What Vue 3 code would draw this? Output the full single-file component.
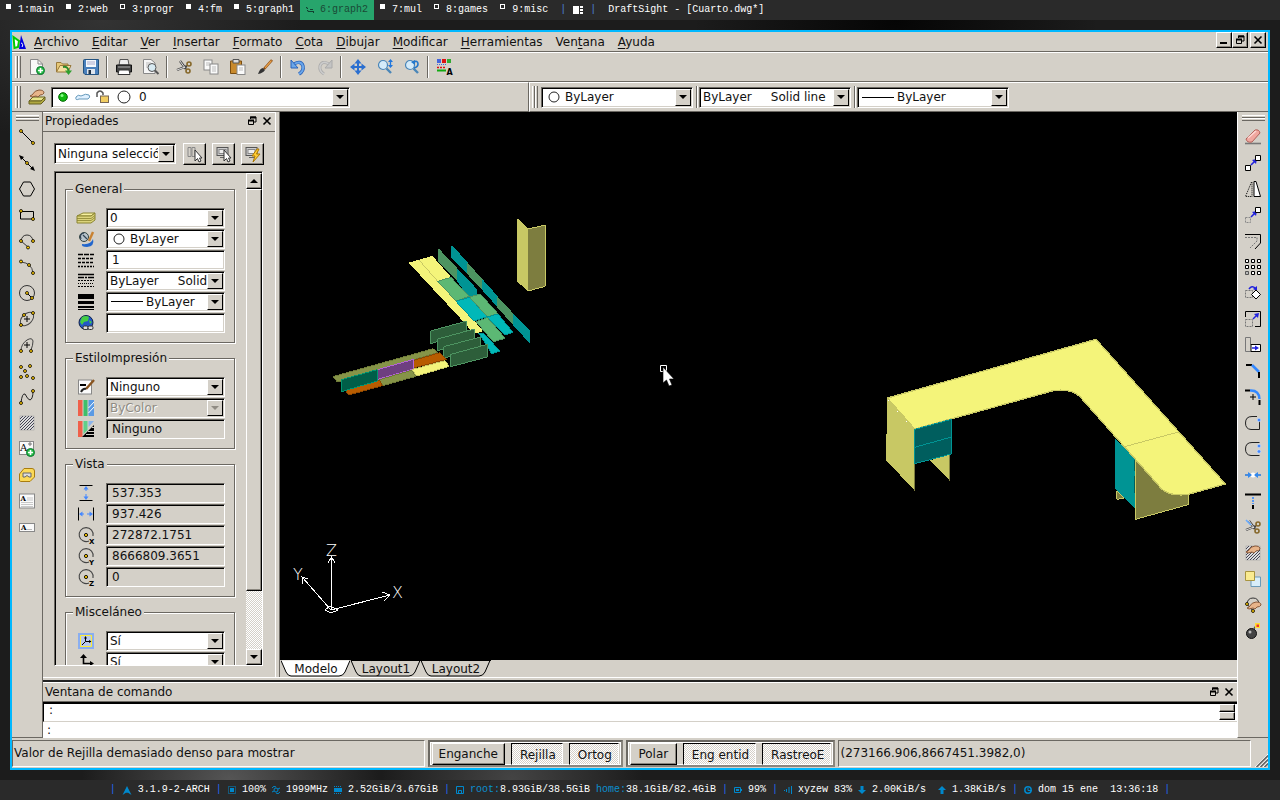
<template>
  <div class="screen">
    <!-- Workspace bar -->
    <header class="wm-bar">
      <button
        v-for="ws in workspaces"
        :key="ws.name"
        class="workspace"
        :class="{ active: ws.active }"
      >
        <svg v-if="ws.active" class="ws-swirl" viewBox="0 0 8 6">
          <path d="M0 .5h1v1h1M1 3.500h1v1h5M4 2.500h3M7.500 4v2" />
        </svg>
        <span v-else class="ws-mark" :class="{ hollow: ws.hollow }" />
        {{ ws.name }}
      </button>
      <span class="bar-sep">|</span>
      <svg class="layout-icon" viewBox="0 0 10 8">
        <path d="M0 0h6v8H0zM7 0h3v2H7zM7 3h3v2H7zM7 6h3v2H7z" fill="#fff" />
      </svg>
      <span class="bar-sep">|</span>
      <span class="wm-title">DraftSight - [Cuarto.dwg*]</span>
    </header>

    <div class="desktop">
      <main class="window">
        <!-- Menu bar -->
        <nav class="menu-bar">
          <svg class="app-icon" viewBox="0 0 16 16">
            <path d="M1.500 3L7 7L6 13L2.500 14Z" fill="#fff" stroke="#0c0" stroke-width="2" />
            <path d="M9 1l5 14H7z" fill="#00d" />
            <path d="M9 9c2 0 2 3 1 4" fill="none" stroke="#fff" />
          </svg>
          <button v-for="item in menus" :key="item.join('')" class="menu-item">
            {{ item[0] }}<u>{{ item[1] }}</u>{{ item[2] }}
          </button>
          <div class="mdi-buttons">
            <button class="mdi" aria-label="Minimizar">
              <svg viewBox="0 0 10 10"><path d="M1 8h7" stroke="#000" stroke-width="2" /></svg>
            </button>
            <button class="mdi" aria-label="Restaurar">
              <svg viewBox="0 0 10 10" v-html="icons.restore" />
            </button>
            <button class="mdi mdi-close" aria-label="Cerrar">
              <svg viewBox="0 0 10 10" v-html="icons.close" />
            </button>
          </div>
        </nav>

        <!-- Standard toolbar -->
        <div class="toolbar">
          <span class="handle" />
          <template v-for="(group, g) in standardTools" :key="g">
            <span v-if="g" class="tool-sep" />
            <button v-for="name in group" :key="name" class="tool" :aria-label="name">
              <svg class="icon" viewBox="0 0 16 16" v-html="icons[name]" />
            </button>
          </template>
        </div>

        <!-- Layer and property toolbars -->
        <div class="toolbar-row">
          <div class="toolbar layer-bar">
            <span class="handle" />
            <button class="tool" aria-label="Administrador de capas">
              <svg class="icon" viewBox="0 0 16 16" v-html="icons.layerManager" />
            </button>
            <div class="combo layer-combo">
              <svg class="layer-state" viewBox="0 0 74 16" v-html="icons.layerState" />
              <select aria-label="Capa"><option>0</option></select>
              <span class="arrow" />
            </div>
          </div>
          <div class="toolbar props-bar">
            <span class="handle" />
            <div class="combo with-circle">
              <svg class="circle-mark" viewBox="0 0 12 12" v-html="icons.ring" />
              <select aria-label="Color"><option>ByLayer</option></select>
              <span class="arrow" />
            </div>
            <span class="thin-sep" />
            <div class="combo">
              <select aria-label="Estilo de línea">
                <option>{{ solidLine }}</option>
              </select>
              <span class="arrow" />
            </div>
            <span class="thin-sep" />
            <div class="combo with-line">
              <span class="line-mark" />
              <select aria-label="Grosor de línea"><option>ByLayer</option></select>
              <span class="arrow" />
            </div>
          </div>
        </div>

        <div class="work-area">
          <aside class="side-tools left-tools">
            <span class="handle-h" />
            <button v-for="name in drawTools" :key="name" class="side-tool" :aria-label="name">
              <svg class="icon" viewBox="0 0 16 16" v-html="icons[name]" />
            </button>
          </aside>

          <div class="center">
            <div class="upper">
              <!-- Properties palette -->
              <section class="palette">
                <div class="dock-title">
                  <span>Propiedades</span>
                  <button class="dock-btn" aria-label="Desacoplar">
                    <svg viewBox="0 0 10 10" v-html="icons.restore" />
                  </button>
                  <button class="dock-btn" aria-label="Cerrar panel">
                    <svg viewBox="0 0 10 10" v-html="icons.close" />
                  </button>
                </div>
                <div class="selection-row">
                  <div class="combo">
                    <select aria-label="Selección"><option>Ninguna selección</option></select>
                    <span class="arrow" />
                  </div>
                  <button
                    v-for="name in ['pickAdd', 'pickObjects', 'quickSelect']"
                    :key="name"
                    class="raised"
                    :aria-label="name"
                  >
                    <svg class="icon" viewBox="0 0 16 16" v-html="icons[name]" />
                  </button>
                </div>
                <div class="scroll-box">
                  <div class="scroll-content">
                    <fieldset v-for="group in propertyGroups" :key="group.title" class="group">
                      <legend>{{ group.title }}</legend>
                      <label v-for="row in group.rows" :key="row.icon" class="prop-row">
                        <svg class="icon prop-icon" viewBox="0 0 16 16" v-html="icons[row.icon]" />
                        <span
                          v-if="row.type === 'select'"
                          class="combo"
                          :class="[row.mark && 'with-' + row.mark, { disabled: row.disabled }]"
                        >
                          <svg
                            v-if="row.mark === 'circle'"
                            class="circle-mark"
                            viewBox="0 0 12 12"
                            v-html="icons.ring"
                          />
                          <span v-if="row.mark === 'line'" class="line-mark" />
                          <select :disabled="row.disabled" :aria-label="row.icon">
                            <option>{{ row.value }}</option>
                          </select>
                          <span class="arrow" />
                        </span>
                        <input
                          v-else
                          class="field"
                          type="text"
                          :class="{ flat: row.readonly }"
                          :readonly="row.readonly"
                          :value="row.value"
                          :aria-label="row.icon"
                        >
                      </label>
                    </fieldset>
                  </div>
                  <div class="scrollbar">
                    <button class="scroll-btn up" aria-label="Subir" />
                    <div class="thumb" />
                    <div class="track" />
                    <button class="scroll-btn down" aria-label="Bajar" />
                  </div>
                </div>
              </section>

              <!-- Drawing area -->
              <section class="drawing">
                <svg class="scene" viewBox="280 112 957 548" preserveAspectRatio="xMidYMid meet">
                  <g transform="translate(320 205) scale(0.33333)" shape-rendering="crispEdges">
                    <polygon
                      v-for="(p, i) in shelfPolys"
                      :key="i"
                      :fill="p[0]"
                      :stroke="p[1]"
                      stroke-width="3"
                      :points="p[2]"
                    />
                    <path d="M298 166L352 228" stroke="#c8c864" stroke-width="3" />
                  </g>
                  <g
                    transform="translate(870 330) scale(0.33333)"
                    stroke-width="3"
                    shape-rendering="crispEdges"
                  >
                    <path d="M180 391L241 373V452Z" fill="#c8c864" />
                    <path d="M240 373V452" stroke="#7d7d3f" />
                    <path d="M52 206L136 298V482L48 392V312H52Z" fill="#c8c864" />
                    <path d="M135 400V482" stroke="#7d7d3f" />
                    <path d="M740 482V508L762 505Z" fill="#7d7d3f" stroke="#c8c864" />
                    <path d="M796 388L880 480L955 490V524L796 568Z" fill="#7d7d3f" stroke="#c8c864" />
                    <path d="M736 325L796 386V538L736 478Z" fill="#009494" />
                    <path d="M795 390V424M795 438V490" stroke="#005e5e" />
                    <path
                      d="M52 204L678 28L1066 462L955 493Q902 500 876 478L630 200Q605 175 550 182L134 297Z"
                      fill="#f4f47a"
                      stroke="#c8c864"
                      stroke-width="4"
                    />
                    <path d="M764 350L925 306" stroke="#c8c864" />
                    <path d="M134 298L244 268V372L134 401Z" fill="#005e5e" stroke="#009494" />
                    <path d="M134 352L244 321" stroke="#009494" />
                    <path d="M54 212h3M81 244h3M108 274h3" stroke="#fff" />
                  </g>
                  <!-- Axes -->
                  <g stroke="#fff" fill="none" shape-rendering="crispEdges">
                    <path d="M331.500 610V557M328 563L331.500 557L335 563" />
                    <path d="M331 610L390 595M382 592L390 595L384 601" />
                    <path d="M331 610L302 577M303 584L302 577L308 579" />
                    <path d="M325 610L330 606L338 610L331 613Z" />
                  </g>
                  <g class="axis-label">
                    <text x="326" y="556">Z</text>
                    <text x="392" y="598">X</text>
                    <text x="293" y="580">Y</text>
                  </g>
                  <!-- Cursor -->
                  <path d="M660.500 365.500h6v6h-6z" fill="none" stroke="#fff" />
                  <path
                    d="M663 367V383L666.500 380L669 386L672 385L669.500 379H674Z"
                    fill="#fff"
                    stroke="#000"
                    stroke-width="0.6"
                  />
                </svg>
                <div class="tabs">
                  <button v-for="(tab, i) in tabs" :key="tab" class="tab" :class="{ current: !i }">
                    <svg class="tab-shape" viewBox="0 0 70 17" preserveAspectRatio="none">
                      <path
                        d="M0 0.500L5 12Q7 16 10 16H58Q62 16 64 12L69 0.500"
                        :fill="i ? '#d4d0c8' : '#fff'"
                        stroke="#000"
                      />
                      <path v-if="i" d="M0 0.500H70" stroke="#000" />
                    </svg>
                    <span>{{ tab }}</span>
                  </button>
                </div>
              </section>
            </div>

            <!-- Command window -->
            <section class="command">
              <div class="dock-title">
                <span>Ventana de comando</span>
                <button class="dock-btn" aria-label="Desacoplar comando">
                  <svg viewBox="0 0 10 10" v-html="icons.restore" />
                </button>
                <button class="dock-btn" aria-label="Cerrar comando">
                  <svg viewBox="0 0 10 10" v-html="icons.close" />
                </button>
              </div>
              <div class="history">
                <span>:</span>
                <div class="history-scroll">
                  <button aria-label="Anterior" />
                  <button aria-label="Siguiente" />
                </div>
              </div>
              <input v-model="command" class="command-input" type="text" aria-label="Comando">
            </section>
          </div>

          <aside class="side-tools right-tools">
            <span class="handle-h" />
            <button v-for="name in modifyTools" :key="name" class="side-tool" :aria-label="name">
              <svg class="icon" viewBox="0 0 16 16" v-html="icons[name]" />
            </button>
          </aside>
        </div>

        <!-- Status bar -->
        <footer class="status">
          <div class="status-panel">Valor de Rejilla demasiado denso para mostrar</div>
          <div v-for="(group, g) in toggles" :key="g" class="toggle-group">
            <button
              v-for="toggle in group"
              :key="toggle.name"
              class="toggle"
              :aria-pressed="toggle.on"
              @click="toggle.on = !toggle.on"
            >
              {{ toggle.name }}
            </button>
          </div>
          <div class="status-panel">(273166.906,8667451.3982,0)</div>
          <svg class="grip" viewBox="0 0 14 14">
            <path d="M1 14L14 1M5 14L14 5M9 14L14 9" stroke="#fff" />
            <path d="M2.500 14L14 2.500M6.500 14L14 6.500M10.500 14L14 10.500" stroke="#666" stroke-width="1.600" />
          </svg>
        </footer>
      </main>
    </div>

    <!-- System information bar -->
    <footer class="sys-bar">
      <template v-for="(part, i) in sysInfo" :key="i">
        <span v-if="part === '|'" class="sys-sep">|</span>
        <svg
          v-else-if="part.icon"
          class="sys-icon"
          :class="{ wide: part.wide, spaced: part.spaced }"
          viewBox="0 0 8 8"
          v-html="part.icon"
        />
        <span v-else :class="{ spaced: part.spaced }"><b v-if="part.key">{{ part.key }}</b>{{ part.text }}</span>
      </template>
    </footer>
  </div>
</template>

<script setup>
import { ref, reactive } from 'vue'

const command = ref(':')
const solidLine = 'ByLayer\u00a0\u00a0\u00a0\u00a0\u00a0Solid line'

const workspaces = [
  { name: '1:main' },
  { name: '2:web' },
  { name: '3:progr', hollow: true },
  { name: '4:fm' },
  { name: '5:graph1' },
  { name: '6:graph2', active: true },
  { name: '7:mul' },
  { name: '8:games', hollow: true },
  { name: '9:misc', hollow: true }
]

// Text before, mnemonic, text after
const menus = [
  ['', 'A', 'rchivo'],
  ['', 'E', 'ditar'],
  ['', 'V', 'er'],
  ['', 'I', 'nsertar'],
  ['', 'F', 'ormato'],
  ['', 'C', 'ota'],
  ['', 'D', 'ibujar'],
  ['', 'M', 'odificar'],
  ['', 'H', 'erramientas'],
  ['Ven', 't', 'ana'],
  ['', 'A', 'yuda']
]

const standardTools = [
  ['new', 'open', 'save'],
  ['print', 'preview'],
  ['cut', 'copy', 'paste', 'brush'],
  ['undo', 'redo'],
  ['pan', 'zoomDynamic', 'zoomPrevious'],
  ['options']
]

const drawTools = [
  'line', 'infiniteLine', 'polygon', 'rectangle', 'polyline', 'arc', 'circle', 'ellipse',
  'ellipseArc', 'points', 'spline', 'hatch', 'note', 'block', 'paragraph', 'textLine'
]

const modifyTools = [
  'erase', 'copyEntity', 'mirror', 'move', 'offset', 'pattern', 'rotate', 'scale', 'stretch',
  'chamfer', 'fillet', 'breakOne', 'breakTwo', 'weld', 'extend', 'trim', 'editHatch',
  'order', 'editPolyline', 'explode'
]

const propertyGroups = [
  {
    title: 'General',
    rows: [
      { icon: 'layer', type: 'select', value: '0' },
      { icon: 'color', type: 'select', value: 'ByLayer', mark: 'circle' },
      { icon: 'lineScale', value: '1' },
      { icon: 'lineStyle', type: 'select', value: solidLine },
      { icon: 'lineWeight', type: 'select', value: 'ByLayer', mark: 'line' },
      { icon: 'hyperlink', value: '' }
    ]
  },
  {
    title: 'EstiloImpresión',
    rows: [
      { icon: 'printStyle', type: 'select', value: 'Ninguno' },
      { icon: 'colorTable', type: 'select', value: 'ByColor', disabled: true },
      { icon: 'weightTable', value: 'Ninguno', readonly: true }
    ]
  },
  {
    title: 'Vista',
    rows: [
      { icon: 'height', value: '537.353', readonly: true },
      { icon: 'width', value: '937.426', readonly: true },
      { icon: 'centerX', value: '272872.1751', readonly: true },
      { icon: 'centerY', value: '8666809.3651', readonly: true },
      { icon: 'centerZ', value: '0', readonly: true }
    ]
  },
  {
    title: 'Misceláneo',
    rows: [
      { icon: 'ccsIcon', type: 'select', value: 'Sí' },
      { icon: 'ccsOrigin', type: 'select', value: 'Sí' }
    ]
  }
]

const tabs = ['Modelo', 'Layout1', 'Layout2']

const toggles = reactive([
  [
    { name: 'Enganche', on: false },
    { name: 'Rejilla', on: true },
    { name: 'Ortog', on: true }
  ],
  [
    { name: 'Polar', on: false },
    { name: 'Eng entid', on: true },
    { name: 'RastreoE', on: true }
  ]
])

// Fill, stroke, points
const shelfPolys = [
  ['#c8c864', '#c8c864', '594,42 624,72 624,258 594,230'],
  ['#7d7d3f', '#c8c864', '624,72 676,60 676,244 624,258'],
  ['#009494', '#009494', '395,122 442,172 442,206 395,158'],
  ['#4d9461', '#4d9461', '442,174 487,224 487,254 442,206'],
  ['#009494', '#009494', '487,224 532,274 532,304 487,254'],
  ['#4d9461', '#4d9461', '532,276 579,326 579,358 532,306'],
  ['#009494', '#009494', '580,327 630,378 630,414 580,360'],
  ['#4d9461', '#4d9461', '356,132 411,190 411,226 356,170'],
  ['#009494', '#009494', '412,192 469,252 469,270 446,274 412,228'],
  ['#f4f47a', '#f4f47a', '268,174 337,154 391,216 352,228 410,290 462,348 487,378 464,382 428,346'],
  ['#5cb874', '#4d9461', '353,229 393,217 447,274 408,288'],
  ['#00b8b8', '#009494', '408,289 448,277 502,335 462,348'],
  ['#5cb874', '#4d9461', '448,275 482,268 534,326 502,335'],
  ['#00b8b8', '#009494', '502,336 534,327 579,382 556,390'],
  ['#5cb874', '#4d9461', '468,350 502,338 556,400 520,410'],
  ['#00b8b8', '#009494', '476,384 492,386 540,438 515,446'],
  ['#869448', '#6e7a38', '38,515 340,431 352,443 52,531'],
  ['#2d5e3a', '#4d9461', '332,378 441,348 441,385 332,416'],
  ['#f4f47a', '#f4f47a', '444,366 460,350 487,378 466,384'],
  ['#2d5e3a', '#4d9461', '353,402 463,372 463,410 353,437'],
  ['#2d5e3a', '#4d9461', '372,425 481,396 481,430 372,459'],
  ['#2d5e3a', '#4d9461', '392,448 502,418 502,456 392,485'],
  ['#b85c00', '#8c4600', '281,466 360,443 380,463 281,489'],
  ['#6e3f80', '#b464d4', '173,494 281,463 281,492 173,523'],
  ['#869448', '#6e7a38', '178,524 275,496 288,514 188,542'],
  ['#f4f47a', '#c8c864', '276,494 375,467 388,484 290,513'],
  ['#b85c00', '#8c4600', '74,553 178,525 188,542 86,570'],
  ['#005e48', '#009470', '64,524 172,494 172,528 64,560']
]

const sysInfo = [
  '|',
  { icon: '<path d="M4 0L8 8L5 6H3L0 8Z" fill="#08c"/>', wide: true },
  { text: '3.1.9-2-ARCH' },
  '|',
  { icon: '<path d="M2 2h4v4H2z" fill="#08c"/><path d="M.5.5h7v7h-7z" fill="none" stroke="#08c" stroke-dasharray="1 1"/>' },
  { text: '100%' },
  { icon: '<circle cx="4" cy="4" r="2" fill="none" stroke="#08c"/><path d="M0 2q2-3 4-1M8 6q-2 3-4 1M0 6l2-1M6 3l2-1" fill="none" stroke="#08c"/>' },
  { text: '1999MHz' },
  { icon: '<path d="M0 2h8v4H0z" fill="#08c"/><path d="M0 .5h8M0 7.500h8" stroke="#08c" stroke-dasharray="1 1"/>' },
  { text: '2.52GiB/3.67GiB' },
  '|',
  { icon: '<path d="M.5.5h7v7h-7zM2.500 7V4.500h3V7" fill="none" stroke="#08c"/>' },
  { key: 'root:', text: '8.93GiB/38.5GiB' },
  { key: 'home:', text: '38.1GiB/82.4GiB' },
  '|',
  { icon: '<path d="M.5 1.500h6v5h-6zM7.500 3v2" fill="none" stroke="#08c"/><path d="M2 3h3v2H2z" fill="#08c"/>' },
  { text: '99%' },
  '|',
  { icon: '<path d="M.5 4v1M2.500 3v3M5 1v6M7.500 0v8" stroke="#08c"/>' },
  { text: 'xyzew 83%' },
  { icon: '<path d="M2.500 0h3v4H8L4 8L0 4h2.500z" fill="#08c"/>' },
  { text: '2.00KiB/s' },
  { icon: '<path d="M2.500 8h3V4H8L4 0L0 4h2.500z" fill="#08c"/>', spaced: true },
  { text: '1.38KiB/s' },
  '|',
  { icon: '<circle cx="4" cy="4" r="3.200" fill="none" stroke="#08c" stroke-width="1.500"/><path d="M4 2v2.500h4" fill="none" stroke="#08c"/>' },
  { text: 'dom 15 ene' },
  { text: '13:36:18', spaced: true },
  '|'
]

// Icon building blocks
const dot = (x, y) => `<circle cx="${x}" cy="${y}" r="1.500" fill="#fc0" stroke="#000" stroke-width=".8"/>`
const stroke = (d, color = '#000', width = 1, extra = '') =>
  `<path d="${d}" fill="none" stroke="${color}" stroke-width="${width}" ${extra}/>`
const fill = (d, color, edge = 'none') => `<path d="${d}" fill="${color}" stroke="${edge}"/>`
const node = (x, y) => `<circle cx="${x}" cy="${y}" r="1.800" fill="#48f" stroke="#cfe3ff" stroke-width=".6"/>`

const page = (x, y, w, h) =>
  `<rect x="${x}" y="${y}" width="${w}" height="${h}" fill="#fafafa" stroke="#888"/>`
const plus = '<circle cx="11.500" cy="11.500" r="4" fill="#2b4" stroke="#173"/>' +
  stroke('M11.500 9v5M9 11.500h5', '#fff', 1.6)
const hand = fill('M3 6Q6 1 10 1Q15 1 15 4Q14 6 11 6L9 8L7 7L3 8L1 7Z', '#e8b48a', '#8a5a3a')
const hatchFill = '<rect x="1" y="1" width="14" height="14" fill="#ddd" stroke="#999" stroke-width=".5"/>' +
  stroke('M1 4L4 1M1 7L7 1M1 10L10 1M1 13L13 1M2 15L15 2M5 15L15 5M8 15L15 8M11 15L15 11', '#445', 1)
const lens = '<circle cx="6" cy="6" r="4.500" fill="#d4ebfa" stroke="#4a86b8" stroke-width="1.200"/>' +
  stroke('M9.500 9.500L14 14', '#4a86b8', 2.4)
const scissors = stroke('M4 2L10 10M1 11L11 7', '#444', 2.4) + stroke('M4 2L9 9M1 11L9 8', '#eee', 0.9) +
  '<circle cx="13" cy="5" r="2" fill="none" stroke="#86682a" stroke-width="1.600"/>' +
  '<circle cx="12" cy="12" r="2" fill="none" stroke="#86682a" stroke-width="1.600"/>'
const target = (axis) =>
  stroke('M11 14A7 7 0 1 1 15 9', '#444', 1.1) + '<circle cx="8" cy="8" r="1.600" fill="#fc0" stroke="#000" stroke-width=".9"/>' +
  `<text x="11" y="17" font-family="DejaVu Sans" font-size="7" font-weight="bold">${axis}</text>`
const letterA = (x, y, size) =>
  `<text x="${x}" y="${y}" font-family="DejaVu Serif" font-weight="bold" font-size="${size}">A</text>`
const monitor = '<rect x="1" y="1.500" width="11" height="8" fill="#ccc" stroke="#555"/><rect x="3" y="3.500" width="7" height="4" fill="#eee" stroke="#888"/>' +
  stroke('M4 11.500h6', '#666')
const pointer = fill('M8 4V15L10.500 12.500L12 16L14 15L12.500 12H15Z', '#fff', '#333')

const icons = {
  restore: '<path d="M3.500 3V1H9V6H7" fill="none" stroke="#000"/><path d="M3 1.500h6" stroke="#000" stroke-width="2"/><path d="M1.500 4.500h5v4h-5z" fill="none" stroke="#000"/><path d="M1 4.500h6" stroke="#000" stroke-width="2"/>',
  close: '<path d="M1.500 1.500L8.500 8.500M8.500 1.500L1.500 8.500" stroke="#000" stroke-width="1.600"/>',
  ring: '<circle cx="6" cy="6" r="5" fill="#fff" stroke="#222"/>',
  layerState:
    '<circle cx="6" cy="8" r="4.300" fill="#1b1" stroke="#060"/><circle cx="5" cy="6.500" r="1.500" fill="#8f8"/>' +
    '<path d="M19 8Q21 5 24 7Q29 4 32 6Q34 8 31 10H22Q18 12 19 8Z" fill="#dff0ff" stroke="#69b"/>' +
    '<path d="M40 8V4Q43 0 46 4V6" fill="none" stroke="#555" stroke-width="1.500"/>' +
    '<rect x="43.500" y="7" width="8" height="6.500" fill="#f1cd62" stroke="#765"/>' +
    '<circle cx="67" cy="8" r="6" fill="#fff" stroke="#222"/>',

  new: fill('M1.500.5H9L13.500 5V15.500H1.500Z', '#f8f8f8', '#888') + stroke('M9 .5V5H13.500', '#888') + plus,
  open: fill('M.5 13V3.500H5L6.500 5H12V7', '#e6c878', '#98783a') + fill('M.5 13L4 6.500H15L12 13Z', '#f5dfa0', '#98783a') +
    stroke('M7 8Q12 7 12.500 12', '#2a8a2a', 2) + fill('M9 11.500H16L12.500 16Z', '#2fa02f'),
  save: fill('M.5 1.500Q.5.5 1.500.5H15.500V15.500H2L.5 14Z', '#4a80bc', '#23527f') + fill('M3 1H13V8H3Z', '#f4f8fc') +
    stroke('M4 3h8M4 5h8', '#aac') + fill('M4 10H12V15H4Z', '#dfe6ee') + fill('M5.500 11H8V15H5.500Z', '#234'),
  print: fill('M4 .5H12L13 6H3Z', '#eee', '#555') + fill('M.5 6H15.500V13H.5Z', '#444', '#111') +
    stroke('M2 8h12', '#aaa') + fill('M3 11H13L14 15.500H2Z', '#fff', '#333'),
  preview: fill('M.5.5H8L12 4V14.500H.5Z', '#f6f6f6', '#888') + stroke('M3 4h5M3 6h4M3 8h4', '#bbb') +
    '<circle cx="9" cy="8.500" r="4" fill="#d8eaf2" stroke="#555"/>' + stroke('M12 11.500L15.500 15', '#555', 2),
  cut: scissors,
  copy: page(1, 1, 8, 10) + stroke('M3 4h4M3 6h4', '#bbb') + page(7, 5, 8, 10) + stroke('M9 8h4M9 10h4M9 12h4', '#bbb'),
  paste: fill('M.5 2H11.500V14.500H.5Z', '#c98a2c', '#7a4d10') + fill('M3 .5H9V4H3Z', '#ddd', '#555') +
    page(7, 6, 8, 9.5) + stroke('M9 9h4M9 11h4', '#bbb'),
  brush: stroke('M15 1L7 10', '#8a4a10', 2.6) + stroke('M14.500 1.500L8 9', '#e8a04a', 1.2) +
    fill('M1 15Q3 9 6 9L8 11Q6 14 1 15Z', '#333'),
  undo: stroke('M4 5Q11 1 13 7Q14 12 9 15', '#2a62b8', 3.4) + stroke('M4 5Q11 1 13 7Q14 12 9 15', '#6aa6ea', 2) +
    fill('M1 1V9H8Z', '#6aa6ea', '#2a62b8'),
  redo: stroke('M12 5Q5 1 3 7Q2 12 7 15', '#aaa', 3) + stroke('M12 5Q5 1 3 7Q2 12 7 15', '#ccc', 1.6) +
    fill('M15 1V9H8Z', '#c4c4c4', '#aaa'),
  pan: stroke('M8 3v10M3 8h10', '#2a6fd0', 2) +
    fill('M8 0L11.500 4.500H4.500ZM8 16L11.500 11.500H4.500ZM0 8L4.500 4.500V11.500ZM16 8L11.500 4.500V11.500Z', '#2a6fd0'),
  zoomDynamic: lens + stroke('M13.500 1v7', '#27d', 1.3) + fill('M13.500 0L16 3H11ZM13.500 9L16 6H11Z', '#27d'),
  zoomPrevious: lens + stroke('M9 3Q14 1 14 5Q14 8 10 9', '#27c', 1.6) + fill('M7 3L11 1V6Z', '#27c'),
  options: fill('M0 0H4V4H0Z', '#46d') + fill('M5 0H9V4H5Z', '#d11') + fill('M10 0H14V4H10Z', '#3a3') +
    stroke('M0 5.500h9', '#46d', 1, 'stroke-dasharray="1 1"') + stroke('M0 8.500h9', '#d11', 1.5, 'stroke-dasharray="2 1"') +
    stroke('M0 11.500h9', '#1a1', 2) + '<text x="9.500" y="16" font-family="DejaVu Sans" font-weight="bold" font-size="8">A</text>',
  layerManager: fill('M0 12L4 8H16L12 12Z', '#e8e48a', '#666020') + fill('M0 12V15H12L16 11V8L12 12Z', '#b0a840', '#666020') + hand,

  line: stroke('M2 2L14 14') + dot(2, 2) + dot(14, 14),
  infiniteLine: stroke('M1 1L15 15') + fill('M0 0L5 2L2 5ZM16 16L11 14L14 11Z', '#000') + dot(8, 8),
  polygon: stroke('M4.500 1H11.500L15.500 8L11.500 15H4.500L.5 8Z'),
  rectangle: stroke('M1.500 4.500H14.500V12H1.500Z') + dot(2, 4) + dot(14, 12),
  polyline: stroke('M2 8Q3 2 8 2Q13 2 14 8M2 8L9 14', '#333') + dot(2, 8) + dot(14, 8) + dot(9, 14.5),
  arc: stroke('M2 3Q13 4 14 14', '#444') + dot(2, 2.5) + dot(10, 6) + dot(14, 14),
  circle: '<circle cx="8" cy="8" r="7.500" fill="none" stroke="#333"/>' + stroke('M8 8L13 13') + dot(8, 8) + dot(13, 13),
  ellipse: '<ellipse cx="8" cy="8" rx="8" ry="5" transform="rotate(-45 8 8)" fill="none" stroke="#444"/>' +
    stroke('M8 5v6M5 8h6') + dot(14, 2) + dot(5, 4) + dot(2, 14),
  ellipseArc: stroke('M2 14Q2 7 8 3Q13 0 14 4Q14 8 12 13', '#444') + stroke('M8 5v6M5 8h6') + dot(2, 14) + dot(12, 14),
  points: dot(2, 4) + dot(11, 3) + dot(6, 8) + dot(2, 14) + dot(8, 13) + dot(14, 15),
  spline: stroke('M2 14Q3 4 6 5Q9 11 11 11Q14 10 14 2', '#222') + dot(2, 14) + dot(14, 2),
  hatch: hatchFill,
  note: page(0.5, 0.5, 14, 13) + '<text x="1" y="10" font-family="DejaVu Serif" font-size="10">A</text>' +
    '<circle cx="11" cy="3" r="1.200" fill="none" stroke="#333" stroke-width=".7"/>' + plus,
  block: fill('M5 1.500H13Q15.500 1.500 15.500 4V10L11 14.500H1.500Q.5 14.500.5 13V7Z', '#fbd958', '#a87c10') +
    '<path d="M4 10V6H12V10H10Q8 7 6 10Z" fill="#ddd" stroke="#666"/>',
  paragraph: page(0.5, 1, 15, 14) + letterA(1.5, 8, 7) + stroke('M8 5h6M8 7h6M2 9.500h12M2 11.500h12M2 13.500h12', '#bbb', 0.8),
  textLine: page(0.5, 4.5, 15, 8) + letterA(2, 11, 7) + stroke('M8 10.500h5', '#bbb'),

  erase: stroke('M0 14.500h16', '#777', 1.6) + fill('M1 10L10 1Q14 0 15 4L7 13Q2 14 1 10Z', '#f0a8a0', '#b06058') +
    stroke('M3 9L11 2', '#fbd8d4', 1.6),
  copyEntity: stroke('M6 10L11 5', '#22d', 1.6) + fill('M12 4L11 9L7 5Z', '#22d') +
    fill('M.5 10.500H5.500V15.500H.5ZM10.500.5H15.500V5.500H10.500Z', '#fff', '#000'),
  mirror: stroke('M6.500 1L.5 15.500H7V1', '#000', 1, 'stroke-dasharray="1 1"') +
    fill('M9 .5H11L15.500 15.500H9Z', '#fff', '#000'),
  move: stroke('M6 10L11 5', '#22d', 1.6) + fill('M12 4L11 9L7 5Z', '#22d') + fill('M10.500.5H15.500V5.500H10.500Z', '#fff', '#000') +
    stroke('M.5 10.500H5.500V15.500H.5Z', '#888', 1, 'stroke-dasharray="2 1"'),
  offset: stroke('M0 1.500H15.500V10L10 16') + stroke('M0 4.500H12V8L5 15', '#777', 1, 'stroke-dasharray="2 1"'),
  pattern: fill('M.5.5H3.500V3.500H.5ZM6.500.5H9.500V3.500H6.500ZM12.500.5H15.500V3.500H12.500ZM.5 6.500H3.500V9.500H.5ZM6.500 6.500H9.500V9.500H6.500ZM12.500 6.500H15.500V9.500H12.500ZM6.500 12.500H9.500V15.500H6.500ZM12.500 12.500H15.500V15.500H12.500Z', '#fff', '#000') +
    fill('M.5 12.500H3.500V15.500H.5Z', '#bbb', '#555'),
  rotate: stroke('M.5 5.500H7.500V12.500H.5Z', '#777', 1, 'stroke-dasharray="2 1"') + stroke('M4 4Q7 0 10 3', '#22d', 1.6) +
    fill('M8 4L12 1V6Z', '#22d') + fill('M11 5L15.500 9.500L11 14L6.500 9.500Z', '#fff', '#000'),
  scale: stroke('M.5 6V.5H15.500V15.500H10') + stroke('M.5 8.500H7.500V15.500H.5Z', '#777', 1, 'stroke-dasharray="2 1"') +
    stroke('M8 8L12 4', '#22d', 1.5) + fill('M14 2L13 7L9 3Z', '#22d'),
  stretch: stroke('M.5 14.500V.5H5.500V8', '#777') + stroke('M.5 14.500H6', '#777') + fill('M6 7.500H15.500V14.500H6Z', '#fff', '#000') +
    stroke('M7 11H12', '#22d', 1.5) + fill('M10 8.500L14 11L10 13.500Z', '#22d'),
  chamfer: stroke('M1 2H7', '#000', 2) + stroke('M7 2L14 9', '#38f', 2.6) + stroke('M14 9V15', '#000', 2),
  fillet: stroke('M0 1.500H5M14.500 11V16', '#000', 2) + stroke('M5 1.500Q14 1 14.500 10', '#38f', 2.4) + stroke('M8 5v6M5 8h6'),
  breakOne: stroke('M14.500 4V14.500H6Q.5 14 .5 8Q.5 1.500 7 1.500H12', '#222') + node(14, 5),
  breakTwo: stroke('M14.500 14.500H6Q.5 14 .5 8Q.5 1.500 7 1.500H14.500', '#222') + node(14, 5) + node(14, 10.5),
  weld: '<circle cx="8" cy="8" r="2.500" fill="#fff"/>' + stroke('M0 8h6M10 8h6', '#27d', 1.6) +
    fill('M3 5L7 8L3 11ZM13 5L9 8L13 11Z', '#38e'),
  extend: stroke('M0 1.500h16', '#000', 2) + stroke('M8 4v7', '#38f', 1.6, 'stroke-dasharray="2 1"') + stroke('M8 12v4', '#000', 2),
  trim: scissors + stroke('M1 1L6 6', '#6af', 1.6),
  editHatch: hatchFill + hand,
  order: fill('M6 6H15.500V15.500H6Z', '#d8eefa', '#6a9ab8') + fill('M.5.5H9.500V9.500H.5Z', '#faeb90', '#a89440'),
  editPolyline: stroke('M2 8Q2 1 8 1Q14 1 14 8M2 7L8 14', '#333') + dot(2, 7) + dot(8, 14) + `<g transform="translate(1 4)">${hand}</g>`,
  explode: '<circle cx="6.500" cy="10.500" r="5" fill="#444" stroke="#111"/><circle cx="5" cy="9" r="1.500" fill="#bbb"/>' +
    stroke('M9 6Q10 3 12 3', '#555', 1.5) + fill('M10 0H15V5H10Z', '#fd3') + fill('M11.500 1.500H14V4H11.500Z', '#e33'),

  pickAdd: stroke('M1 1.500H4V10.500H1ZM5 1.500H8V10.500H5Z', '#888') + pointer,
  pickObjects: monitor + pointer,
  quickSelect: monitor + fill('M12 3L7 10H10L8 16L15 8H11.500L14 3Z', '#fc3', '#a70'),

  layer: fill('M-1 6L5 3H17L13 6Z', '#f6f0a0', '#8a8430') + fill('M-1 6V13H13L17 10V3L13 6Z', '#dcd47c', '#8a8430') +
    stroke('M-1 8.500H13L17 5.500M-1 10.500H13L17 7.500', '#8a8430', 0.8),
  color: '<path d="M4 13Q13 14 15 8Q17 15 9 16Q3 16 4 13Z" fill="#26c"/>' +
    '<circle cx="6" cy="6" r="4.500" fill="#b8c4cc" stroke="#344"/>' + stroke('M3 8Q1 3 6 2M5 4L9 8', '#345', 1.2) +
    stroke('M15 1L11 10', '#c98232', 2.4),
  lineScale: stroke('M0 2.500h16', '#000', 1.5, 'stroke-dasharray="5 1"') + stroke('M0 6.500h16M0 10.500h16', '#000', 1.5, 'stroke-dasharray="3 1"') +
    stroke('M0 14.500h16', '#000', 1.5, 'stroke-dasharray="2 1"'),
  lineStyle: stroke('M0 1.500h16', '#000', 1.5) + stroke('M0 4.500h16', '#000', 1.5, 'stroke-dasharray="6 1 2 1"') +
    stroke('M0 7.500h16M0 13.500h16', '#000', 1, 'stroke-dasharray="2 1"') + stroke('M0 10.500h16', '#000', 1, 'stroke-dasharray="1 1"'),
  lineWeight: fill('M0 0H16V5H0ZM0 7H16V10H0ZM0 12H16V14H0ZM0 15H16V16H0Z', '#000'),
  hyperlink: '<circle cx="8" cy="7.500" r="7" fill="#2458c8" stroke="#124"/>' +
    fill('M4 2Q8 0 11 2L10 6L6 7L4 10L2 7Z', '#4c4') + fill('M11 5L14 7L12 9Z', '#4c4') +
    '<rect x="5" y="11" width="5" height="3.500" rx="1.500" fill="#ddd" stroke="#333"/><rect x="10" y="11" width="5" height="3.500" rx="1.500" fill="#ddd" stroke="#333"/>',
  printStyle: page(0.5, 1, 13, 14) + stroke('M2 6h6', '#000', 2) + stroke('M16 1L8 10', '#8a5520', 2.4) +
    stroke('M3 13Q5 9 8 10', '#222', 2),
  colorTable: fill('M0 0H4.500V16H0Z', '#f0604a') + fill('M5.500 0H9.500V16H5.500Z', '#3fbf6a') + fill('M10.500 0H16V16H10.500Z', '#5a9ae4') +
    stroke('M10.500 8L16 2M10.500 13L16 7', '#fff'),
  weightTable: fill('M0 0H4.500V16H0Z', '#f0604a') + fill('M5.500 0H9.500V9L5.500 13Z', '#5fcf8a') + fill('M10.500 0H16L10.500 6Z', '#8ab4ec') +
    fill('M4 16L16 4V6H14V7H16V10H10V11H16V13H8V14H16V16Z', '#000'),
  height: stroke('M1.500.5h13M1.500 15.500h13') + stroke('M8 2v12', '#48f', 1, 'stroke-dasharray="4 3"') +
    fill('M8 1L10.500 4.500H5.500ZM8 15L10.500 11.500H5.500Z', '#48f'),
  width: stroke('M.5 1.500v13M15.500 1.500v13') + stroke('M2 8h12', '#48f', 1, 'stroke-dasharray="4 3"') +
    fill('M1 8L4.500 5.500V10.500ZM15 8L11.500 5.500V10.500Z', '#48f'),
  centerX: target('X'),
  centerY: target('Y'),
  centerZ: target('Z'),
  ccsIcon: fill('M0 0H16V16H0Z', '#8aaef0') + fill('M2.500 2.500H13.500V13.500H2.500Z', '#b8c8ec', '#fe3') +
    stroke('M7.500 4V8.500H12.500M7.500 8.500L4 12') + fill('M7.500 3L9 5.500H6ZM13.500 8.500L11 10V7Z', '#000'),
  ccsOrigin: stroke('M5.500 2V9.500H14', '#000', 1.6) + fill('M5.500 0L9 4H2ZM16 9.500L12 12V7Z', '#000')
}
</script>

<style>
body {
  background: #151515;
}
</style>

<style scoped>
.screen {
  height: 100vh;
  display: flex;
  flex-direction: column;
  font: 12px/14px "DejaVu Sans", sans-serif;
  color: #111;
  overflow: hidden;
}

.screen * {
  box-sizing: border-box;
}

button,
input,
select {
  font: inherit;
  color: inherit;
  margin: 0;
  padding: 0;
  border: 0;
  border-radius: 0;
  background: none;
  outline: none;
}

svg {
  display: block;
  flex: none;
}

/* Window manager bars */
.wm-bar,
.sys-bar {
  flex: none;
  height: 20px;
  display: flex;
  background: #2a2a2a;
  color: #fff;
  font: 10px/20px "Liberation Mono", monospace;
  white-space: nowrap;
}

.workspace {
  display: flex;
  padding: 0 6px;
}

.workspace.active {
  background: #27a56c;
  color: #1a4a36;
}

.ws-mark {
  width: 5px;
  height: 5px;
  margin: 4px 7px 0 0;
  background: #fff;
}

.ws-mark.hollow {
  background: none;
  border: 1px solid #fff;
}

.ws-swirl {
  width: 8px;
  height: 6px;
  margin: 7px 6px 0 0;
  fill: none;
  stroke: #124030;
}

.bar-sep {
  margin: 0 6px;
  color: #4a80d8;
}

.layout-icon {
  width: 10px;
  height: 8px;
  margin: 6px 1px 0;
}

.wm-title {
  margin-left: 6px;
}

.sys-bar {
  justify-content: center;
  gap: 6px;
}

.sys-bar b {
  font-weight: normal;
  color: #0a90d0;
}

.sys-sep {
  color: #2468f0;
}

.sys-icon {
  width: 8px;
  height: 8px;
  margin-top: 6px;
}

.sys-icon.wide {
  width: 10px;
  height: 9px;
}

.spaced {
  margin-left: 6px;
}

.desktop {
  flex: 1;
  min-height: 0;
  padding: 10px;
  background:
    radial-gradient(ellipse at 18% 100%, #555 0, transparent 10%),
    radial-gradient(ellipse at 40% 100%, #444 0, transparent 12%),
    radial-gradient(ellipse at 8% 0, #333 0, transparent 12%),
    radial-gradient(ellipse at 70% 0, #050505 0, transparent 16%),
    #1c1c1c;
}

/* Main window */
.window {
  height: 100%;
  display: flex;
  flex-direction: column;
  border: 2px solid #00b8ff;
  background: #d4d0c8;
}

.menu-bar {
  flex: none;
  height: 20px;
  display: flex;
  align-items: center;
  border-bottom: 1px solid #6b6862;
}

.app-icon {
  width: 16px;
  height: 16px;
}

.menu-item {
  padding: 0 7px 0 6px;
  white-space: nowrap;
}

.menu-item u {
  text-underline-offset: 2px;
}

.mdi-buttons {
  display: flex;
  margin: 0 2px 3px auto;
}

.mdi,
.raised,
.scroll-btn,
.thumb,
.history-scroll button {
  background: #d4d0c8;
  border: 1px solid;
  border-color: #fff #000 #000 #fff;
  box-shadow: inset -1px -1px #8a867e;
}

.mdi {
  width: 16px;
  height: 16px;
  padding: 2px;
}

.mdi svg,
.dock-btn svg {
  width: 10px;
  height: 10px;
}

.mdi-close {
  margin-left: 2px;
}

/* Toolbars */
.toolbar {
  flex: none;
  height: 30px;
  display: flex;
  align-items: center;
  gap: 1px;
  padding-left: 3px;
  border-top: 1px solid #fff;
  border-bottom: 1px solid #6b6862;
}

.handle {
  width: 6px;
  height: 22px;
  margin-right: 2px;
  background: repeating-linear-gradient(90deg, #fff 0 1px, #d4d0c8 1px 2px, #6b6862 2px 3px);
}

.tool {
  width: 26px;
  height: 26px;
  display: grid;
  place-items: center;
}

.icon {
  width: 16px;
  height: 16px;
  overflow: visible;
}

.tool-sep {
  width: 5px;
  height: 22px;
  border: solid #d4d0c8;
  border-width: 0 2px 0 1px;
  background: linear-gradient(90deg, #6b6862 50%, #fff 50%);
}

.toolbar-row {
  flex: none;
  display: flex;
}

.layer-bar {
  flex: 0 1 517px;
  border-right: 1px solid #6b6862;
}

.props-bar {
  flex: 1;
  padding-left: 2px;
  border-left: 1px solid #fff;
}

.thin-sep {
  width: 2px;
  height: 22px;
  margin-left: 2px;
  border-left: 1px solid #6b6862;
  border-right: 1px solid #fff;
}

/* Combo boxes and fields */
.combo,
.field {
  flex: 1;
  min-width: 0;
  height: 21px;
  background: #fff;
  border: 1px solid;
  border-color: #6b6862 #fff #fff #6b6862;
  box-shadow: inset 1px 1px #000, inset -1px -1px #d4d0c8;
}

.combo {
  display: flex;
  align-items: center;
  padding: 1px;
}

.combo select {
  flex: 1;
  min-width: 0;
  width: 0;
  height: 16px;
  padding-left: 2px;
  appearance: none;
}

.layer-bar .layer-combo {
  flex: 0 1 299px;
}

.layer-combo select {
  padding-left: 8px;
}

.layer-state {
  width: 74px;
  height: 16px;
  margin-left: 4px;
}

.props-bar .combo {
  flex: 0 1 152px;
}

.arrow {
  flex: none;
  width: 16px;
  height: 100%;
  display: grid;
  place-items: center;
  background: #d4d0c8;
  border: 1px solid;
  border-color: #fff #000 #000 #fff;
  pointer-events: none;
}

.arrow::after,
.scroll-btn::after {
  content: "";
  border: 4px solid transparent;
  border-top-color: #000;
  border-bottom: 0;
}

.circle-mark {
  width: 12px;
  height: 12px;
  margin: 0 3px 0 5px;
}

.line-mark {
  width: 32px;
  height: 1px;
  margin: 0 1px 0 3px;
  background: #000;
}

.disabled,
.flat {
  background: #d4d0c8;
}

.disabled select {
  color: #908c84;
  opacity: 1;
  text-shadow: 1px 1px #fff;
}

.disabled .arrow::after {
  border-top-color: #908c84;
}

/* Work area */
.work-area {
  flex: 1;
  min-height: 0;
  display: flex;
}

.side-tools {
  flex: none;
  width: 31px;
  display: flex;
  flex-direction: column;
  align-items: center;
  padding-top: 3px;
  border-bottom: 1px solid #6b6862;
}

.left-tools {
  border-right: 1px solid #6b6862;
}

.right-tools {
  border-left: 1px solid #fff;
}

.handle-h {
  flex: none;
  width: 23px;
  height: 6px;
  margin-bottom: 3px;
  background: repeating-linear-gradient(#fff 0 1px, #d4d0c8 1px 2px, #6b6862 2px 3px);
}

.side-tool {
  flex: none;
  width: 26px;
  height: 26px;
  display: grid;
  place-items: center;
}

.center {
  flex: 1;
  min-width: 0;
  display: flex;
  flex-direction: column;
}

.upper {
  flex: 1;
  min-height: 0;
  display: flex;
  border-bottom: 1px solid #fff;
}

.palette {
  flex: none;
  width: 233px;
  display: flex;
  flex-direction: column;
  border: solid #fff;
  border-width: 1px 1px 0 0;
}

.dock-title {
  flex: none;
  height: 19px;
  display: flex;
  align-items: center;
  padding: 0 3px 2px 2px;
  border-bottom: 1px solid #6b6862;
}

.dock-title span {
  flex: 1;
}

.dock-btn {
  width: 10px;
  height: 10px;
  margin-left: 5px;
}

.selection-row {
  display: flex;
  gap: 6px;
  padding: 11px 11px 0 11px;
}

.selection-row .combo {
  margin-right: 1px;
}

.raised {
  width: 23px;
  height: 22px;
  display: grid;
  place-items: center;
}

.scroll-box {
  flex: 1;
  min-height: 0;
  display: flex;
  margin: 6px 12px 11px 11px;
  border: 1px solid;
  border-color: #6b6862 #fff #fff #6b6862;
  box-shadow: inset 1px 1px #000;
  padding: 1px 0 0 1px;
}

.scroll-content {
  flex: 1;
  min-width: 0;
  overflow: hidden;
  padding: 9px 11px 0 9px;
}

.group {
  min-width: 0;
  margin: 0 0 8px;
  padding: 11px 9px 9px 12px;
  border: 1px solid #6b6862;
  box-shadow: 1px 1px #fff, inset 1px 1px #fff;
}

.group legend {
  height: 14px;
  margin-left: -5px;
  padding: 0 2px;
  background: #d4d0c8;
}

.prop-row {
  height: 21px;
  display: flex;
  align-items: center;
}

.prop-icon {
  margin-right: 12px;
}

.field {
  height: 20px;
  padding: 0 5px;
}

.prop-row .combo {
  height: 20px;
}

.scrollbar {
  flex: none;
  width: 16px;
  display: flex;
  flex-direction: column;
}

.scroll-btn {
  flex: none;
  height: 16px;
  display: grid;
  place-items: center;
}

.up::after {
  transform: rotate(180deg);
}

.thumb {
  flex: 401;
}

.track {
  flex: 58;
  background: repeating-conic-gradient(#fff 0 25%, #d4d0c8 0 50%) 0 0 / 2px 2px;
}

.drawing {
  flex: 1;
  min-width: 0;
  display: flex;
  flex-direction: column;
  margin-left: 3px;
  border-left: 1px solid #6b6862;
}

.scene {
  flex: 1;
  min-height: 0;
  width: 100%;
  background: #000;
}

.axis-label {
  font: 200 16px "DejaVu Sans", sans-serif;
  fill: #fff;
}

.tabs {
  flex: none;
  height: 17px;
  display: flex;
  padding-left: 1px;
}

.tab {
  position: relative;
  width: 70px;
  height: 17px;
}

.tab-shape {
  position: absolute;
  inset: 0;
  width: 100%;
  height: 100%;
}

.tab span {
  position: relative;
}

/* Command window */
.command {
  flex: none;
  margin-top: 2px;
  border-top: 2px solid #222;
}

.command .dock-title {
  height: 20px;
  padding-bottom: 0;
  border-top: 1px solid #fff;
}

.history {
  height: 20px;
  display: flex;
  justify-content: space-between;
  padding: 0 2px 1px 5px;
  background: #fff;
  border: solid #000;
  border-width: 2px 0 0 1px;
  border-bottom: 1px solid #d4d0c8;
  line-height: 12px;
}

.history-scroll {
  width: 16px;
  display: grid;
}

.history-scroll button {
  height: 8px;
}

.command-input {
  display: block;
  width: 100%;
  height: 16px;
  padding-left: 4px;
  background: #fff;
}

/* Status bar */
.status {
  flex: none;
  height: 30px;
  display: flex;
  gap: 3px;
  padding: 2px 0 1px;
}

.status-panel {
  flex: 1;
  min-width: 0;
  padding: 0 1px;
  line-height: 25px;
  white-space: nowrap;
  border: 1px solid;
  border-color: #6b6862 #fff #fff #6b6862;
}

.toggle-group {
  flex: none;
  display: flex;
  gap: 6px;
  padding: 1px 2px;
  border: 1px solid #6b6862;
  box-shadow: inset 1px 1px #fff, inset -1px -1px #fff;
  border-width: 2px;
  border-color: #6b6862 #8a867e #8a867e #6b6862;
}

.toggle {
  height: 22px;
  min-width: 47px;
  padding: 0 6px;
  white-space: nowrap;
  border: 1px solid;
  border-color: #fff #000 #000 #fff;
  box-shadow: inset -1px -1px #8a867e;
}

.toggle[aria-pressed="true"] {
  padding: 1px 6px 0 8px;
  border-color: #000 #fff #fff #000;
  box-shadow: none;
  background: repeating-conic-gradient(#fff 0 25%, #d4d0c8 0 50%) 0 0 / 2px 2px;
}

.grip {
  width: 14px;
  height: 14px;
  align-self: flex-end;
}
</style>
